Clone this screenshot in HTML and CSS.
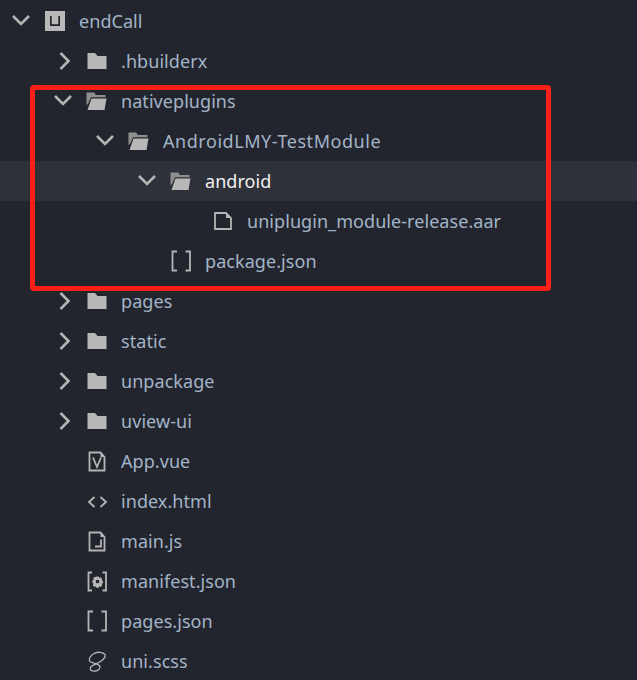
FILE: index.html
```html
<!DOCTYPE html>
<html lang="en">
  <head>
    <meta charset="UTF-8" />
    <meta name="viewport" content="width=device-width, initial-scale=1.0" />
    <title>endCall</title>
    <link rel="stylesheet" href="styles.css">
  </head>
  <body>
    <svg class="defs" width="0" height="0">
      <symbol id="down" viewBox="0 0 24 24"><path class="line" d="M4 7 12 15 20 7" /></symbol>
      <symbol id="next" viewBox="0 0 24 24"><path class="line" d="M9.500 4 17.500 12 9.500 20" /></symbol>
      <symbol id="root" viewBox="0 0 24 24"><path class="fill" fill-rule="evenodd" d="M2 2h20v20H2zM7 7v10h10V7h-1.700v8.300H8.700V7z" /></symbol>
      <symbol id="closed" viewBox="0 0 24 24"><path class="fill" d="M2.500 4h7.500l2.500 3H21.500v13H2.500z" /></symbol>
      <symbol id="open" viewBox="0 0 24 24">
        <path class="back" d="M1.500 16V3.500H9L11 6h9.500v2.300H6L3 15z" />
        <path class="fill" d="M6.500 9.500h15L19.500 21H2.500z" />
      </symbol>
      <symbol id="file" viewBox="0 0 24 24"><path class="line thin" d="M4 4h11l5 5v11H4z" /><path class="fill" d="M15 4l5 5h-5z" /></symbol>
      <symbol id="vue" viewBox="0 0 24 24"><path class="line thin" d="M4.500 3.500h11l4 4.500v13.500h-15z" /><path class="fill" d="M15.500 3.500l4 4.500h-4z" /><path class="line thin" d="M8 8.500l4 9.500 4-9.500" /></symbol>
      <symbol id="code" viewBox="0 0 24 24"><path class="line thin" d="M9.500 8 4 13l5.500 5M15.500 8l5.500 5-5.500 5" /></symbol>
      <symbol id="js" viewBox="0 0 24 24"><path class="line thin" d="M4.500 3.500h11l4 4.500v13.500h-15z" /><path class="fill" d="M15.500 3.500l4 4.500h-4z" /><path class="line thin" d="M16 10.500v7h-6" /></symbol>
      <symbol id="brackets" viewBox="0 0 24 24"><path class="line thin" d="M8 2.500H3.500v19H8M16.500 2.500H21v19h-4.500" /></symbol>
      <symbol id="manifest" viewBox="0 0 24 24">
        <path class="line thin" d="M7 3.500H3.500v18H7M17.500 3.500H21v18h-3.500" />
        <g transform="translate(12.500 12.500) scale(.85) translate(-12 -12)">
          <path class="fill" fill-rule="evenodd" d="M10.500 6h3l.4 1.800 1.700-.8 2 2-.9 1.700 1.800.5v3l-1.800.5.900 1.700-2 2-1.700-.9-.4 1.800h-3l-.4-1.800-1.700.9-2-2 .9-1.700L6 13.500v-3l1.800-.5-.9-1.700 2-2 1.700.8zM12 9.800a2.200 2.200 0 1 0 0 4.400 2.200 2.200 0 0 0 0-4.400z" />
        </g>
      </symbol>
      <symbol id="sass" viewBox="0 0 24 24"><path class="line hair" d="M20 5.500C18 3 13 2.500 9 4.500 5.500 6.500 3.500 10 4.500 12 5.500 14 12 14 14.500 16.500 16 18.500 14 21.500 10.500 22 7 22.500 4.500 21.500 5.500 18.500 7 15.500 14 14.500 17.500 11 19.500 9 21 7 20 5.500" /></symbol>
    </svg>

    <div class="tree">
      <div class="row"><svg class="arrow"><use href="#down" /></svg><svg class="icon"><use href="#root" /></svg><span class="name">endCall</span></div>
      <div class="row d1"><svg class="arrow"><use href="#next" /></svg><svg class="icon"><use href="#closed" /></svg><span class="name">.hbuilderx</span></div>
      <div class="row d1"><svg class="arrow"><use href="#down" /></svg><svg class="icon"><use href="#open" /></svg><span class="name">nativeplugins</span></div>
      <div class="row d2"><svg class="arrow"><use href="#down" /></svg><svg class="icon"><use href="#open" /></svg><span class="name wide">AndroidLMY-TestModule</span></div>
      <div class="row d3 active"><svg class="arrow"><use href="#down" /></svg><svg class="icon"><use href="#open" /></svg><span class="name">android</span></div>
      <div class="row d4 leaf"><svg class="icon"><use href="#file" /></svg><span class="name">uniplugin_module-release.aar</span></div>
      <div class="row d3 leaf"><svg class="icon"><use href="#brackets" /></svg><span class="name">package.json</span></div>
      <div class="row d1"><svg class="arrow"><use href="#next" /></svg><svg class="icon"><use href="#closed" /></svg><span class="name">pages</span></div>
      <div class="row d1"><svg class="arrow"><use href="#next" /></svg><svg class="icon"><use href="#closed" /></svg><span class="name">static</span></div>
      <div class="row d1"><svg class="arrow"><use href="#next" /></svg><svg class="icon"><use href="#closed" /></svg><span class="name">unpackage</span></div>
      <div class="row d1"><svg class="arrow"><use href="#next" /></svg><svg class="icon"><use href="#closed" /></svg><span class="name">uview-ui</span></div>
      <div class="row d1 leaf"><svg class="icon"><use href="#vue" /></svg><span class="name">App.vue</span></div>
      <div class="row d1 leaf"><svg class="icon"><use href="#code" /></svg><span class="name">index.html</span></div>
      <div class="row d1 leaf"><svg class="icon"><use href="#js" /></svg><span class="name">main.js</span></div>
      <div class="row d1 leaf"><svg class="icon"><use href="#manifest" /></svg><span class="name">manifest.json</span></div>
      <div class="row d1 leaf"><svg class="icon"><use href="#brackets" /></svg><span class="name">pages.json</span></div>
      <div class="row d1 leaf"><svg class="icon"><use href="#sass" /></svg><span class="name">uni.scss</span></div>
      <div class="mark"></div>
    </div>
  </body>
</html>
```

FILE: styles.css
```css
* {
  margin: 0;
  padding: 0;
  box-sizing: border-box;
}
html,
body {
  height: 100%;
  overflow: hidden;
  background: #22252d;
}
.defs {
  position: absolute;
}
.tree {
  position: relative;
  padding-top: 1px;
  font-family: "Noto Sans", "Noto Sans CJK SC", sans-serif;
  font-size: 18px;
  letter-spacing: 0.06px;
  color: #a2b4c8;
}
.row {
  display: flex;
  align-items: center;
  height: 40px;
}
.d1 {
  padding-left: 42px;
}
.d2 {
  padding-left: 84px;
}
.d3 {
  padding-left: 126px;
}
.d4 {
  padding-left: 168px;
}
.leaf {
  margin-left: 43px;
}
.active {
  background: #2e313a;
  color: #f0f0f0;
}
.wide {
  letter-spacing: 0.55px;
}
.arrow {
  flex: none;
  width: 24px;
  height: 24px;
  margin: 0 10px 0 9px;
}
.icon {
  flex: none;
  width: 24px;
  height: 24px;
  margin-right: 12px;
}
.line {
  fill: none;
  stroke: #b4b4b4;
  stroke-width: 2.6;
}
.thin {
  stroke-width: 1.8;
}
.hair {
  stroke-width: 1.3;
}
.fill {
  fill: #b8b8b8;
}
.back {
  fill: #8f8f8f;
}
.mark {
  position: absolute;
  left: 30px;
  top: 85px;
  width: 521px;
  height: 206px;
  border: 5px solid #ff1f14;
  border-radius: 4px;
}
```
